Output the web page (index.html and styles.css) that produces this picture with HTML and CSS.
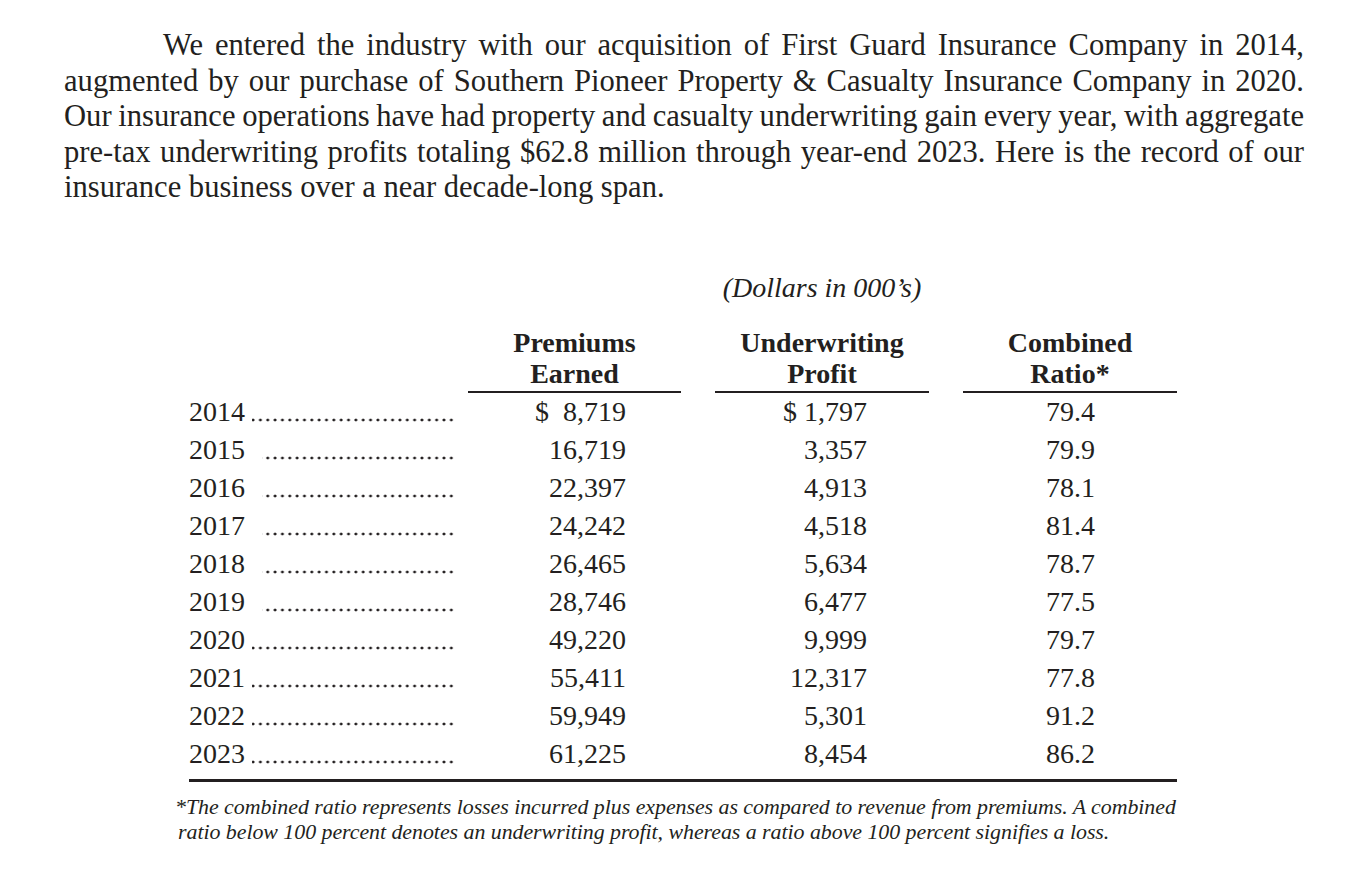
FILE: index.html
```html
<!DOCTYPE html>
<html lang="en">
<head>
<meta charset="utf-8">
<title>Insurance record</title>
<link rel="stylesheet" href="styles.css">
</head>
<body>
<div class="page">
  <p class="intro">
    <span class="line first">We entered the industry with our acquisition of First Guard Insurance Company in 2014,</span>
    <span class="line">augmented by our purchase of Southern Pioneer Property &amp; Casualty Insurance Company in 2020.</span>
    <span class="line tight">Our insurance operations have had property and casualty underwriting gain every year, with aggregate</span>
    <span class="line">pre-tax underwriting profits totaling $62.8 million through year-end 2023. Here is the record of our</span>
    <span class="line last">insurance business over a near decade-long span.</span>
  </p>

  <div class="table">
    <div class="units">(Dollars in 000’s)</div>
    <div class="grid head">
      <div></div>
      <div class="th">Premiums<br>Earned</div>
      <div class="th">Underwriting<br>Profit</div>
      <div class="th">Combined<br>Ratio*</div>
    </div>
    <div class="grid body">
      <div class="yr"><span>2014</span><span class="dots"></span></div>
      <div class="num c1">$&nbsp;&nbsp;8,719</div><div class="num c2">$ 1,797</div><div class="num c3">79.4</div>

      <div class="yr wide"><span>2015</span><span class="dots"></span></div>
      <div class="num c1">16,719</div><div class="num c2">3,357</div><div class="num c3">79.9</div>

      <div class="yr wide"><span>2016</span><span class="dots"></span></div>
      <div class="num c1">22,397</div><div class="num c2">4,913</div><div class="num c3">78.1</div>

      <div class="yr wide"><span>2017</span><span class="dots"></span></div>
      <div class="num c1">24,242</div><div class="num c2">4,518</div><div class="num c3">81.4</div>

      <div class="yr wide"><span>2018</span><span class="dots"></span></div>
      <div class="num c1">26,465</div><div class="num c2">5,634</div><div class="num c3">78.7</div>

      <div class="yr wide"><span>2019</span><span class="dots"></span></div>
      <div class="num c1">28,746</div><div class="num c2">6,477</div><div class="num c3">77.5</div>

      <div class="yr"><span>2020</span><span class="dots"></span></div>
      <div class="num c1">49,220</div><div class="num c2">9,999</div><div class="num c3">79.7</div>

      <div class="yr"><span>2021</span><span class="dots"></span></div>
      <div class="num c1">55,411</div><div class="num c2">12,317</div><div class="num c3">77.8</div>

      <div class="yr"><span>2022</span><span class="dots"></span></div>
      <div class="num c1">59,949</div><div class="num c2">5,301</div><div class="num c3">91.2</div>

      <div class="yr"><span>2023</span><span class="dots"></span></div>
      <div class="num c1">61,225</div><div class="num c2">8,454</div><div class="num c3">86.2</div>
    </div>
    <div class="note">
      <span class="nl">*The combined ratio represents losses incurred plus expenses as compared to revenue from premiums. A combined</span>
      <span class="nl second">ratio below 100 percent denotes an underwriting profit, whereas a ratio above 100 percent signifies a loss.</span>
    </div>
  </div>
</div>
</body>
</html>
```

FILE: styles.css
```css
html, body {
  margin: 0;
  padding: 0;
  background: #ffffff;
}

body {
  color: #231f20;
  font-family: "Liberation Serif", "Times New Roman", serif;
}

.page {
  width: 1350px;
  height: 876px;
  overflow: hidden;
}

.intro {
  margin: 0;
  padding: 28px 0 0 64px;
  width: 1240px;
  font-size: 30.6px;
  line-height: 35.5px;
}

.intro .line {
  display: block;
  white-space: nowrap;
  text-align: justify;
  text-align-last: justify;
}

.intro .line.first {
  padding-left: 99px;
}

.intro .line.tight {
  word-spacing: -1.4px;
}

.intro .line.last {
  text-align-last: left;
}

.table {
  margin: 66px 0 0 189px;
  width: 988px;
  font-size: 28px;
}

.units {
  font-style: italic;
  line-height: 31px;
  height: 31px;
  margin-left: 526px;
  width: 214px;
  text-align: center;
  white-space: nowrap;
}

.grid {
  display: grid;
  grid-template-columns: 245px 213px 214px 214px;
  column-gap: 34px;
}

.head {
  margin-top: 24px;
}

.th {
  font-weight: bold;
  text-align: center;
  line-height: 31px;
  padding-bottom: 2px;
  border-bottom: 2px solid #231f20;
}

.body {
  line-height: 38px;
  padding-bottom: 6px;
  border-bottom: 3px solid #231f20;
}

.yr {
  display: flex;
  align-items: flex-start;
  margin-right: -21px;
  white-space: nowrap;
}

.dots {
  flex: 1;
  height: 4px;
  margin: 25px 0 0 7px;
  background-image: radial-gradient(circle, #231f20 1.2px, rgba(35, 31, 32, 0) 1.7px);
  background-size: 7.35px 4px;
  background-position: right center;
  background-repeat: repeat-x;
}

.yr.wide .dots {
  margin-left: 17px;
}

.num {
  text-align: right;
  white-space: nowrap;
}

.c1 { padding-right: 55px; }
.c2 { padding-right: 62px; }
.c3 { padding-right: 82px; }

.note {
  margin: 12px 0 0 -14px;
  font-style: italic;
  font-size: 21.9px;
  letter-spacing: -0.04px;
  line-height: 25px;
}

.nl {
  display: block;
  white-space: nowrap;
}

.nl.second {
  padding-left: 3px;
}
```
